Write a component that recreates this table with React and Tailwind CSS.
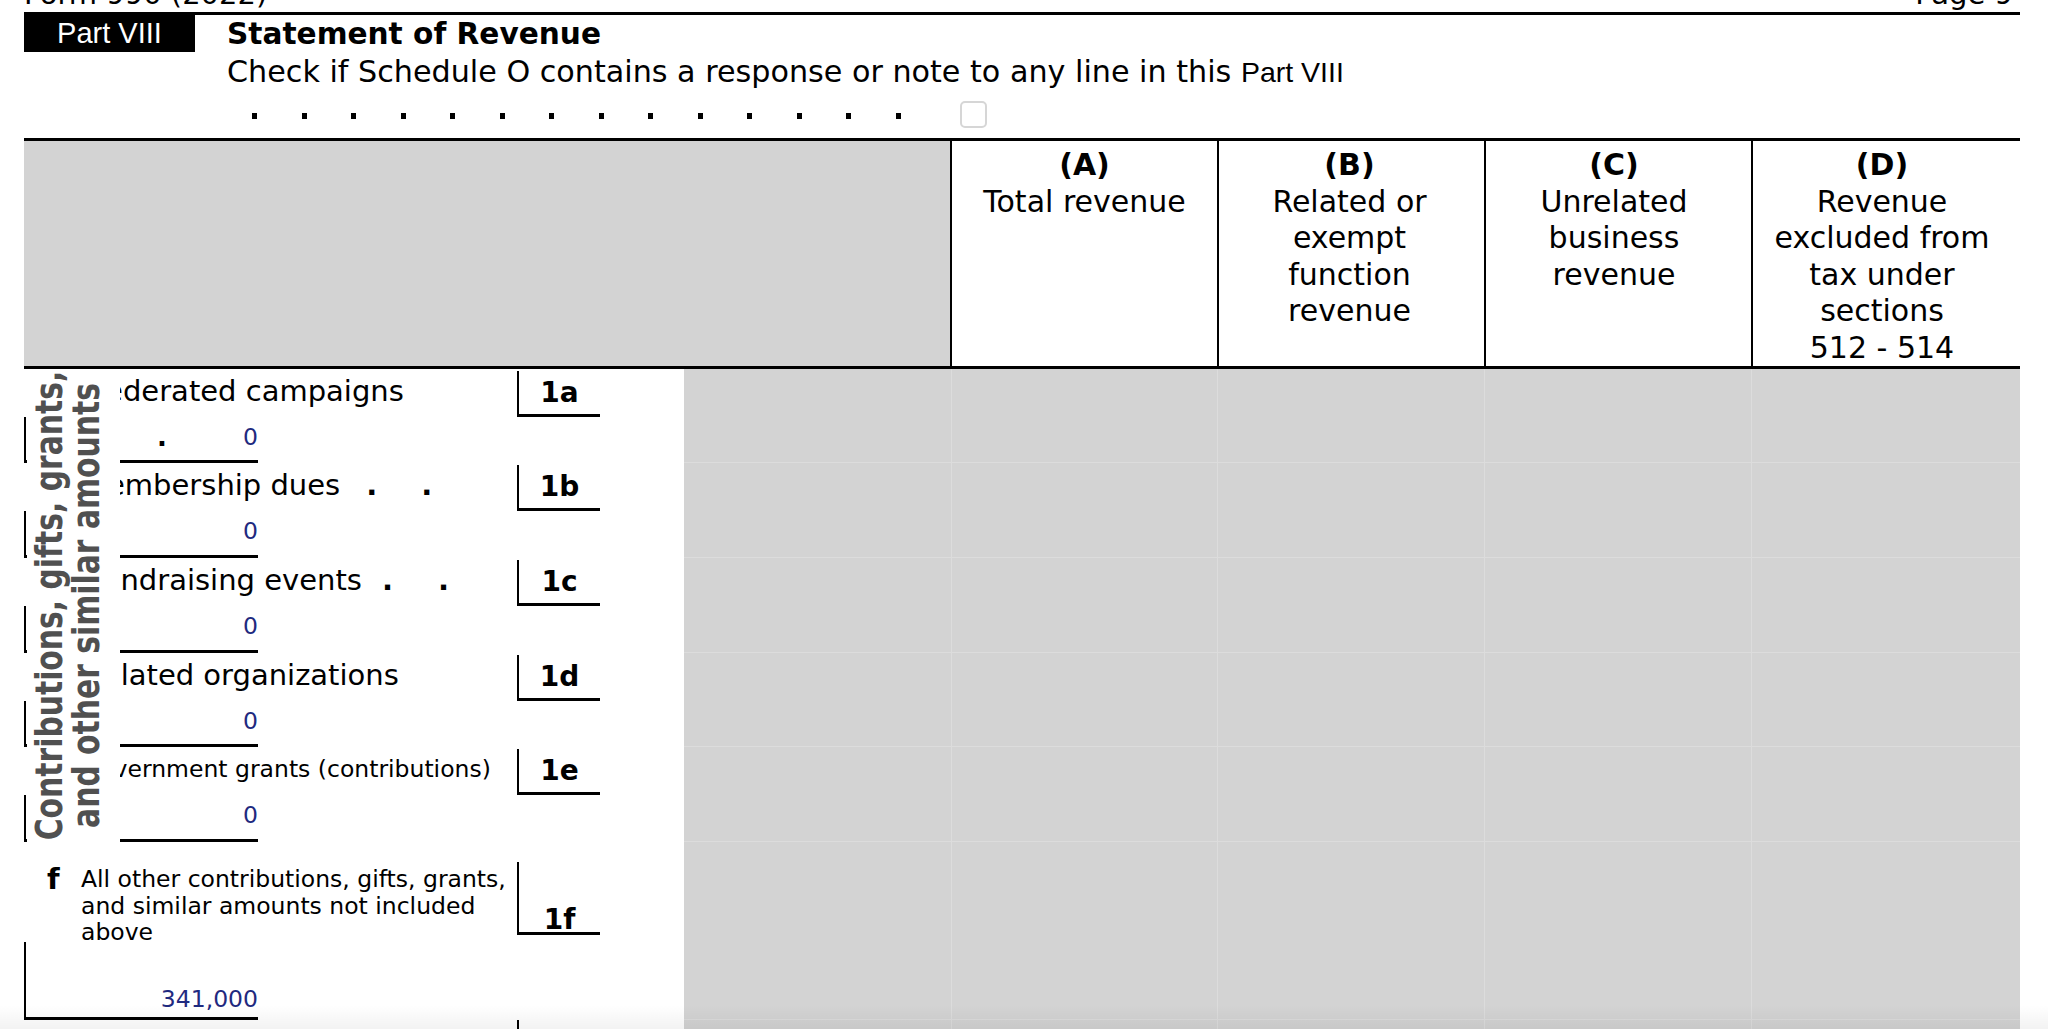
import React from 'react';

const rows = [
  { id: 'a', num: '1a', text: 'Federated campaigns', pad: 'pl-[66px]', size: 'text-[29px]', h: 'h-[94px]', lead: true },
  { id: 'b', num: '1b', text: 'Membership dues', pad: 'pl-[58px]', size: 'text-[29px]', h: 'h-[95px]', dots: ['ml-[26px]', 'ml-[44px]'] },
  { id: 'c', num: '1c', text: 'Fundraising events', pad: 'pl-[63px]', size: 'text-[29px]', h: 'h-[95px]', dots: ['ml-[20px]', 'ml-[45px]'] },
  { id: 'd', num: '1d', text: 'Related organizations', pad: 'pl-[60px]', size: 'text-[29px]', h: 'h-[94px]' },
  { id: 'e', num: '1e', text: 'Government grants (contributions)', pad: 'pl-[57px]', size: 'text-[23.5px]', h: 'h-[95px]' },
];

const GrayCells = () =>
  [0, 1, 2, 3, 4].map((i) => (
    <div
      key={i}
      className={i === 0 ? 'bg-[#d3d3d3] border-b border-[#dcdcdc]' : 'bg-[#d3d3d3] border-b border-l border-[#dcdcdc]'}
    />
  ));

const Amount = ({ value, dot, bottom }) => (
  <div
    className={
      bottom
        ? 'flex flex-1 items-end border-b-[3px] border-l-2 border-black pb-[4px]'
        : 'flex flex-1 items-center border-b-[3px] border-l-2 border-black pb-[4px]'
    }
  >
    {dot && <span className="ml-[131px] font-bold text-[26px] leading-none">.</span>}
    <span className="ml-auto text-[23.5px] leading-[28px] text-[#1f2a7f]">{value}</span>
  </div>
);

const LineRow = ({ row }) => (
  <div className="grid grid-cols-[660px_267px_266px_267px_267px_269px]">
    <div className={`flex flex-col ${row.h}`}>
      <div className="flex h-[48px]">
        <div className={`flex h-[46px] w-[493px] items-center whitespace-nowrap ${row.pad} ${row.size}`}>
          <span>{row.text}</span>
          {row.dots &&
            row.dots.map((m, i) => (
              <span key={i} className={`${m} font-bold`}>.</span>
            ))}
        </div>
        <div className="mt-[2px] flex h-[46px] w-[83px] items-center justify-center border-b-[3px] border-l-2 border-black text-[28px] font-bold">
          {row.num}
        </div>
      </div>
      <div className="flex w-[234px] flex-1">
        <Amount value="0" dot={row.lead} />
      </div>
    </div>
    <GrayCells />
  </div>
);

export default function App() {
  return (
    <div className="relative h-[1029px] w-[2048px] overflow-hidden bg-white font-['DejaVu_Sans',sans-serif] text-black">
      <div className="pl-[24px] pr-[28px]">
        {/* page caption, mostly scrolled off the top */}
        <div className="flex h-[12px] justify-between">
          <span className="-mt-[21px] text-[29px] leading-[30px]">Form 990 (2022)</span>
          <span className="-mt-[21px] mr-[7px] text-[29px] leading-[30px]">Page 9</span>
        </div>

        {/* Part heading */}
        <div className="flex border-t-[3px] border-black">
          <div className="flex h-[37px] w-[171px] items-center justify-center bg-black font-['Liberation_Sans',Arial,sans-serif] text-[29px] text-white">
            Part VIII
          </div>
          <div className="ml-[32px]">
            <div className="text-[29.6px] font-bold leading-[38px]">Statement of Revenue</div>
            <div className="text-[30.2px] leading-[38px]">
              Check if Schedule O contains a response or note to any line in this{' '}
              <span className="font-['Liberation_Sans',Arial,sans-serif] text-[28.5px]">Part VIII</span>
            </div>
            <div className="flex h-[47px] items-center pl-[25px]">
              <div className="flex items-center gap-[44.5px]">
                {Array.from({ length: 14 }).map((_, i) => (
                  <span key={i} className="mt-[2px] h-[6px] w-[5px] bg-black" />
                ))}
              </div>
              <span className="ml-[59.5px] h-[27px] w-[27px] rounded-[5px] border-2 border-[#d6d6d6]" />
            </div>
          </div>
        </div>

        {/* column headings */}
        <div className="grid h-[231px] grid-cols-[926px_267px_267px_267px_269px] border-y-[3px] border-black text-[30px] leading-[36.5px]">
          <div className="bg-[#d3d3d3]" />
          <div className="border-l-2 border-black pt-[6px] text-center">
            <div className="font-bold">(A)</div>
            Total revenue
          </div>
          <div className="border-l-2 border-black pr-[4px] pt-[6px] text-center">
            <div className="font-bold">(B)</div>
            Related or<br />exempt<br />function<br />revenue
          </div>
          <div className="border-l-2 border-black pr-[9px] pt-[6px] text-center">
            <div className="font-bold">(C)</div>
            Unrelated<br />business<br />revenue
          </div>
          <div className="border-l-2 border-black pr-[9px] pt-[6px] text-center">
            <div className="font-bold">(D)</div>
            Revenue<br />excluded from<br />tax under<br />sections<br />512 - 514
          </div>
        </div>

        {/* body */}
        <div className="relative">
          {rows.map((row) => (
            <LineRow key={row.id} row={row} />
          ))}

          <div className="grid grid-cols-[660px_267px_266px_267px_267px_269px]">
            <div className="flex h-[178px] flex-col">
              <div className="flex h-[100px]">
                <div className="flex w-[493px] pt-[21px]">
                  <span className="w-[57px] pl-[23px] text-[29px] font-bold leading-[32px]">f</span>
                  <div className="pt-[3px] text-[23.5px] leading-[26.5px]">
                    All other contributions, gifts, grants,
                    <br />
                    and similar amounts not included
                    <br />
                    above
                  </div>
                </div>
                <div className="mt-[20px] flex h-[73px] w-[83px] items-end justify-center border-b-[3px] border-l-2 border-black pb-[1px] text-[28px] font-bold leading-[22px]">
                  1f
                </div>
              </div>
              <div className="flex w-[234px] flex-1">
                <Amount value="341,000" bottom />
              </div>
            </div>
            <GrayCells />
          </div>

          <div className="grid grid-cols-[660px_267px_266px_267px_267px_269px]">
            <div className="flex h-[60px]">
              <div className="ml-[493px] h-[50px] w-[83px] border-l-2 border-black" />
            </div>
            <GrayCells />
          </div>

          {/* side caption sits over the start of the line descriptions */}
          <div className="absolute left-[3px] top-0 flex h-[473px] w-[93px] items-center justify-center bg-white pr-[11px]">
            <div className="w-[490px] shrink-0 -rotate-90 scale-y-[1.28] whitespace-nowrap text-center text-[29.8px] font-bold leading-[28.5px] text-[#505050]">
              Contributions, gifts, grants,
              <br />
              and other similar amounts
            </div>
          </div>
        </div>
      </div>

      <div className="pointer-events-none absolute bottom-0 left-0 right-0 h-[24px] bg-linear-to-b from-transparent to-black/[0.05]" />
    </div>
  );
}
